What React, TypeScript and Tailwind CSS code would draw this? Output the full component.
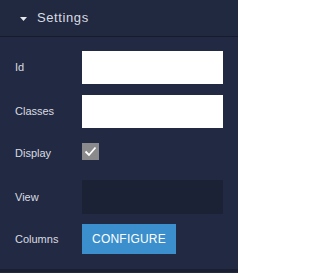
import React from "react";

const labelCls = "w-[82px] shrink-0 pl-[15px] text-[11px] text-[#d9dbe2]";

export default function App() {
  return (
    <div
      className="w-[238px] h-[273px] bg-[#222a43] flex flex-col overflow-hidden"
      style={{ fontFamily: '"Liberation Sans", Arial, sans-serif' }}
    >
      <div className="h-[37px] shrink-0 flex items-center border-b border-[#161c2d] bg-[#212940]">
        <svg width="7" height="4" viewBox="0 0 7 4" className="ml-[20px] mt-[1px]">
          <path d="M0 0 L7 0 L3.5 4 Z" fill="#e6e8ee" />
        </svg>
        <span className="ml-[10px] text-[13px] tracking-[0.6px] text-[#d8dbe3]">Settings</span>
      </div>

      <div className="flex items-center mt-[14px] h-[33px]">
        <span className={labelCls}>Id</span>
        <input className="w-[141px] h-full bg-white outline-none px-2 text-[11px]" />
      </div>

      <div className="flex items-center mt-[11px] h-[33px]">
        <span className={labelCls}>Classes</span>
        <input className="w-[141px] h-full bg-white outline-none px-2 text-[11px]" />
      </div>

      <div className="flex items-center mt-[15px] h-[17px]">
        <span className={labelCls + " pt-[3px]"}>Display</span>
        <div className="w-[17px] h-[17px] bg-[#8a8a8c] flex items-center justify-center">
          <svg width="13" height="11" viewBox="0 0 13 11">
            <path d="M1.5 5.5 L5 9 L11.5 1.5" stroke="#ffffff" strokeWidth="1.8" fill="none" />
          </svg>
        </div>
      </div>

      <div className="flex items-center mt-[20px] h-[34px]">
        <span className={labelCls}>View</span>
        <div className="w-[141px] h-full bg-[#1b2235]" />
      </div>

      <div className="flex items-center mt-[10px] h-[30px]">
        <span className={labelCls}>Columns</span>
        <button className="w-[94px] h-full bg-[#3a8fcc] text-white text-[12px] tracking-[0.2px]">
          CONFIGURE
        </button>
      </div>

      <div className="mt-[15px] h-[3px] bg-[#1a2032]" />
    </div>
  );
}
